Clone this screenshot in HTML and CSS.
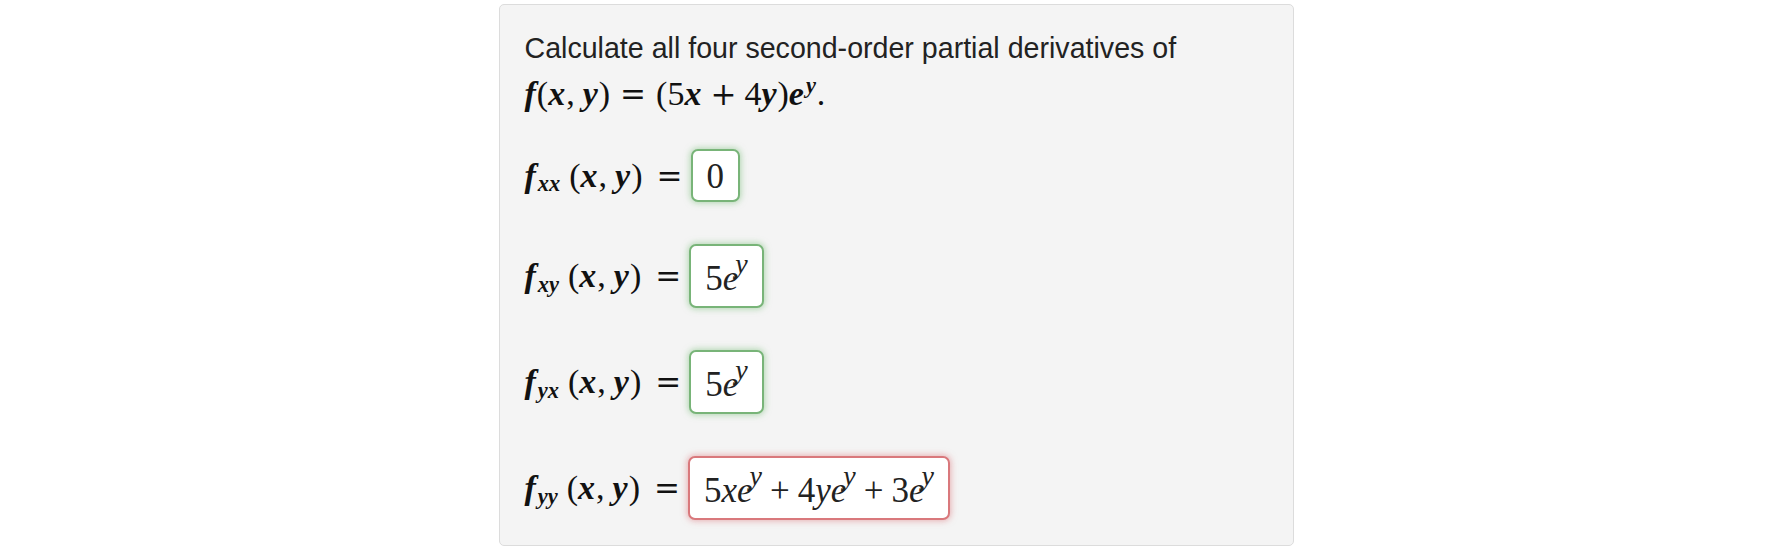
FILE: index.html
```html
<!DOCTYPE html>
<html>
<head>
<meta charset="utf-8">
<link rel="stylesheet" href="styles.css">
</head>
<body>
<div class="card">
  <p class="question">Calculate all four second-order partial derivatives of <span class="m"><i>f</i>(<i>x</i>,<span class="thin"></span><i>y</i>)<span class="rel">=</span>(5<i>x</i><span class="bin">+</span>4<i>y</i>)<i>e</i><sup class="msup"><i>y</i></sup>.</span></p>
  <div class="rows">
    <div class="row">
      <span class="label"><i>f</i><sub class="msub"><i>xx</i></sub><span class="args">(<i>x</i>,<span class="thin"></span><i>y</i>)</span><span class="eq">=</span></span>
      <span class="box ok"><span class="in">0</span></span>
    </div>
    <div class="row">
      <span class="label"><i>f</i><sub class="msub"><i>xy</i></sub><span class="args">(<i>x</i>,<span class="thin"></span><i>y</i>)</span><span class="eq">=</span></span>
      <span class="box ok tall"><span class="in">5<i>e</i><sup class="bsup"><i>y</i></sup></span></span>
    </div>
    <div class="row">
      <span class="label"><i>f</i><sub class="msub"><i>yx</i></sub><span class="args">(<i>x</i>,<span class="thin"></span><i>y</i>)</span><span class="eq">=</span></span>
      <span class="box ok tall"><span class="in">5<i>e</i><sup class="bsup"><i>y</i></sup></span></span>
    </div>
    <div class="row">
      <span class="label"><i>f</i><sub class="msub"><i>yy</i></sub><span class="args">(<i>x</i>,<span class="thin"></span><i>y</i>)</span><span class="eq">=</span></span>
      <span class="box bad tall"><span class="in">5<i>xe</i><sup class="bsup"><i>y</i></sup><span class="bop">+</span>4<i>ye</i><sup class="bsup"><i>y</i></sup><span class="bop">+</span>3<i>e</i><sup class="bsup"><i>y</i></sup></span></span>
    </div>
  </div>
</div>
</body>
</html>
```
FILE: styles.css
```css
html, body {
  margin: 0;
  padding: 0;
  background: #ffffff;
}

.card {
  box-sizing: border-box;
  width: 795px;
  height: 542px;
  margin: 4px auto 0;
  background: #f4f4f4;
  border: 1px solid #dcdcdc;
  border-radius: 5px;
  padding: 20px 25px 24px;
}

.question {
  margin: 0;
  font-family: "Liberation Sans", Arial, sans-serif;
  font-size: 28.6px;
  line-height: 46px;
  color: #222222;
  width: 700px;
}

.m {
  font-family: "Liberation Serif", "Times New Roman", serif;
  font-size: 34px;
  color: #111111;
  white-space: nowrap;
}

.m i, .label i {
  font-style: italic;
  font-weight: 700;
  padding-right: 1px;
}

.thin {
  display: inline-block;
  width: 8px;
}

.rel, .bin, .eq {
  font-family: "DejaVu Serif", "Liberation Serif", serif;
  font-size: 31px;
}

.rel {
  padding: 0 10px;
}

.bin {
  padding: 0 8px;
}

.msup {
  font-size: 0.66em;
  vertical-align: 0.55em;
  line-height: 0;
  margin-left: 1px;
}

.rows {
  margin-top: 31px;
  display: flex;
  flex-direction: column;
  gap: 42px;
}

.row {
  display: flex;
  align-items: center;
  gap: 8px;
}

.label {
  font-family: "Liberation Serif", "Times New Roman", serif;
  font-size: 34px;
  color: #111111;
  white-space: nowrap;
}

.msub {
  font-size: 0.66em;
  vertical-align: -0.22em;
  line-height: 0;
  margin-left: 1px;
}

.args {
  margin-left: 8px;
}

.eq {
  margin-left: 14px;
}

.box {
  box-sizing: border-box;
  display: inline-block;
  padding: 8px 14px 6px;
  background: #ffffff;
  border: 2px solid #7ab77a;
  border-radius: 7px;
  font-family: "Liberation Serif", "Times New Roman", serif;
  font-size: 35px;
  line-height: 35px;
  color: #222222;
  white-space: nowrap;
}

.box.tall {
  padding-top: 15px;
  padding-bottom: 10px;
}

.in {
  display: block;
  height: 35px;
}

.ok {
  border-color: #78b478;
  box-shadow: 0 0 6px 1px rgba(120, 190, 120, 0.55);
}

.bad {
  border-color: #d9787c;
  box-shadow: 0 0 6px 1px rgba(220, 120, 125, 0.55);
}

.bsup {
  font-size: 0.8em;
  vertical-align: 17px;
  line-height: 0;
  margin-left: -3px;
}

.bop {
  padding: 0 8px;
}
```
